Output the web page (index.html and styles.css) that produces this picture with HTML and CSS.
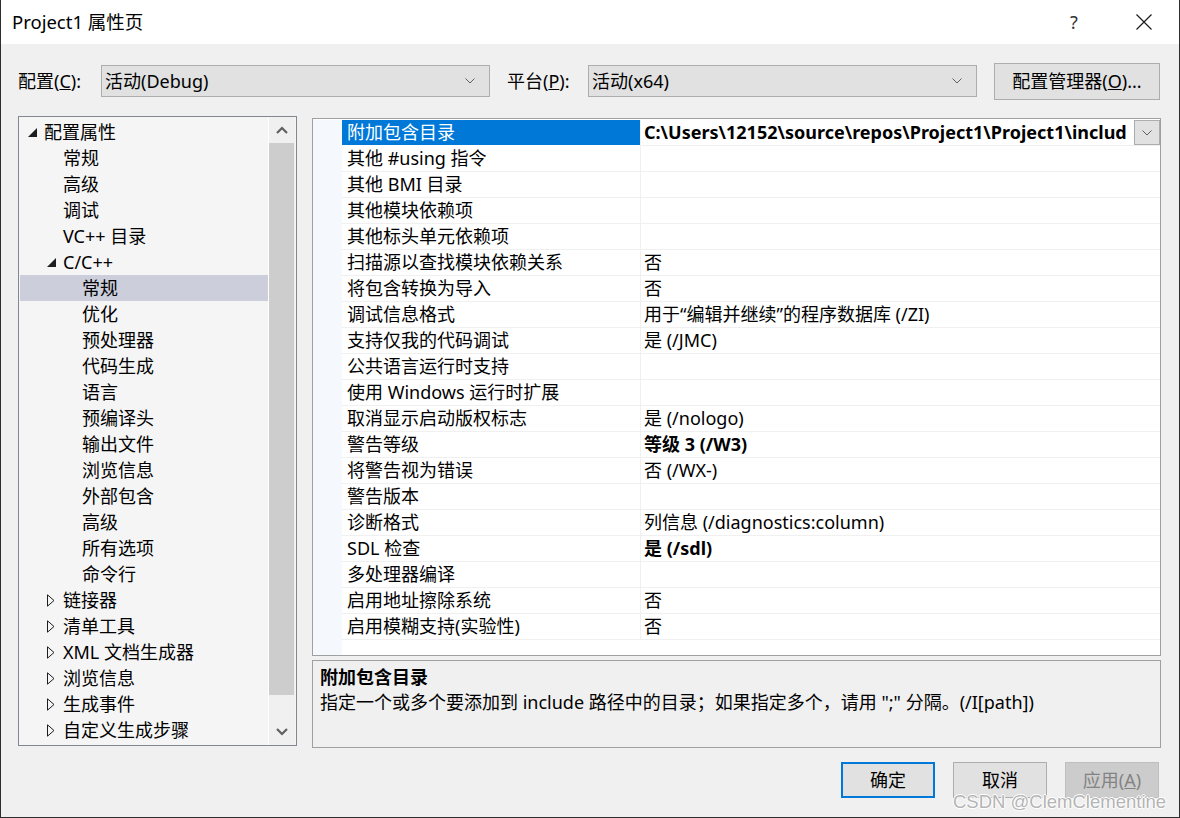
FILE: index.html
```html
<!DOCTYPE html>
<html lang="zh-CN">
<head>
<meta charset="utf-8">
<title>Project1 属性页</title>
<link rel="stylesheet" href="styles.css">
</head>
<body>
<div class="window">
  <div class="titlebar">
    <div class="title">Project1 属性页</div>
    <div class="title-help">?</div>
    <div class="title-close">
      <svg width="16" height="16" viewBox="0 0 16 16"><path d="M0.5 0.5 L15.5 15.5 M15.5 0.5 L0.5 15.5" stroke="#1a1a1a" stroke-width="1.2" fill="none"/></svg>
    </div>
  </div>

  <div class="config-row">
    <span class="lbl">配置(<u>C</u>):</span>
    <div class="combo">
      <span>活动(Debug)</span>
      <svg class="chev" width="10" height="6" viewBox="0 0 10 6"><path d="M0.5 0.5 L5 5 L9.5 0.5" stroke="#606060" stroke-width="1" fill="none"/></svg>
    </div>
    <span class="lbl lbl2">平台(<u>P</u>):</span>
    <div class="combo">
      <span>活动(x64)</span>
      <svg class="chev" width="10" height="6" viewBox="0 0 10 6"><path d="M0.5 0.5 L5 5 L9.5 0.5" stroke="#606060" stroke-width="1" fill="none"/></svg>
    </div>
    <div class="btn cfgmgr">配置管理器(<u>O</u>)...</div>
  </div>

  <div class="main">
    <div class="tree">
      <div class="tree-list">
        <div class="ti l0"><span class="tw"><svg width="9" height="9" viewBox="0 0 9 9"><path d="M9 0 L9 9 L0 9 Z" fill="#1e1e1e"/></svg></span>配置属性</div>
        <div class="ti l1">常规</div>
        <div class="ti l1">高级</div>
        <div class="ti l1">调试</div>
        <div class="ti l1">VC++ 目录</div>
        <div class="ti l1e"><span class="tw"><svg width="9" height="9" viewBox="0 0 9 9"><path d="M9 0 L9 9 L0 9 Z" fill="#1e1e1e"/></svg></span>C/C++</div>
        <div class="ti l2 sel">常规</div>
        <div class="ti l2">优化</div>
        <div class="ti l2">预处理器</div>
        <div class="ti l2">代码生成</div>
        <div class="ti l2">语言</div>
        <div class="ti l2">预编译头</div>
        <div class="ti l2">输出文件</div>
        <div class="ti l2">浏览信息</div>
        <div class="ti l2">外部包含</div>
        <div class="ti l2">高级</div>
        <div class="ti l2">所有选项</div>
        <div class="ti l2">命令行</div>
        <div class="ti l1e"><span class="tw"><svg width="8" height="13" viewBox="0 0 8 13"><path d="M0.5 0.8 L7 6.5 L0.5 12.2 Z" fill="none" stroke="#1e1e1e" stroke-width="1"/></svg></span>链接器</div>
        <div class="ti l1e"><span class="tw"><svg width="8" height="13" viewBox="0 0 8 13"><path d="M0.5 0.8 L7 6.5 L0.5 12.2 Z" fill="none" stroke="#1e1e1e" stroke-width="1"/></svg></span>清单工具</div>
        <div class="ti l1e"><span class="tw"><svg width="8" height="13" viewBox="0 0 8 13"><path d="M0.5 0.8 L7 6.5 L0.5 12.2 Z" fill="none" stroke="#1e1e1e" stroke-width="1"/></svg></span>XML 文档生成器</div>
        <div class="ti l1e"><span class="tw"><svg width="8" height="13" viewBox="0 0 8 13"><path d="M0.5 0.8 L7 6.5 L0.5 12.2 Z" fill="none" stroke="#1e1e1e" stroke-width="1"/></svg></span>浏览信息</div>
        <div class="ti l1e"><span class="tw"><svg width="8" height="13" viewBox="0 0 8 13"><path d="M0.5 0.8 L7 6.5 L0.5 12.2 Z" fill="none" stroke="#1e1e1e" stroke-width="1"/></svg></span>生成事件</div>
        <div class="ti l1e"><span class="tw"><svg width="8" height="13" viewBox="0 0 8 13"><path d="M0.5 0.8 L7 6.5 L0.5 12.2 Z" fill="none" stroke="#1e1e1e" stroke-width="1"/></svg></span>自定义生成步骤</div>
      </div>
      <div class="vscroll">
        <div class="sb-arrow"><svg width="12" height="8" viewBox="0 0 12 8"><path d="M1 7 L6 2 L11 7" stroke="#606060" stroke-width="2.2" fill="none"/></svg></div>
        <div class="sb-thumb"></div>
        <div class="sb-rest"></div>
        <div class="sb-arrow"><svg width="12" height="8" viewBox="0 0 12 8"><path d="M1 1 L6 6 L11 1" stroke="#606060" stroke-width="2.2" fill="none"/></svg></div>
      </div>
    </div>

    <div class="right">
      <div class="grid">
        <div class="row selrow"><div class="gut"></div><div class="nm">附加包含目录</div><div class="val b"><span class="clip">C:\Users\12152\source\repos\Project1\Project1\includ</span><div class="valbtn"><svg width="10" height="6" viewBox="0 0 10 6"><path d="M0.5 0.5 L5 5 L9.5 0.5" stroke="#606060" stroke-width="1" fill="none"/></svg></div></div></div>
        <div class="row"><div class="gut"></div><div class="nm">其他 #using 指令</div><div class="val"></div></div>
        <div class="row"><div class="gut"></div><div class="nm">其他 BMI 目录</div><div class="val"></div></div>
        <div class="row"><div class="gut"></div><div class="nm">其他模块依赖项</div><div class="val"></div></div>
        <div class="row"><div class="gut"></div><div class="nm">其他标头单元依赖项</div><div class="val"></div></div>
        <div class="row"><div class="gut"></div><div class="nm">扫描源以查找模块依赖关系</div><div class="val">否</div></div>
        <div class="row"><div class="gut"></div><div class="nm">将包含转换为导入</div><div class="val">否</div></div>
        <div class="row"><div class="gut"></div><div class="nm">调试信息格式</div><div class="val">用于“编辑并继续”的程序数据库 (/ZI)</div></div>
        <div class="row"><div class="gut"></div><div class="nm">支持仅我的代码调试</div><div class="val">是 (/JMC)</div></div>
        <div class="row"><div class="gut"></div><div class="nm">公共语言运行时支持</div><div class="val"></div></div>
        <div class="row"><div class="gut"></div><div class="nm">使用 Windows 运行时扩展</div><div class="val"></div></div>
        <div class="row"><div class="gut"></div><div class="nm">取消显示启动版权标志</div><div class="val">是 (/nologo)</div></div>
        <div class="row"><div class="gut"></div><div class="nm">警告等级</div><div class="val b">等级 3 (/W3)</div></div>
        <div class="row"><div class="gut"></div><div class="nm">将警告视为错误</div><div class="val">否 (/WX-)</div></div>
        <div class="row"><div class="gut"></div><div class="nm">警告版本</div><div class="val"></div></div>
        <div class="row"><div class="gut"></div><div class="nm">诊断格式</div><div class="val">列信息 (/diagnostics:column)</div></div>
        <div class="row"><div class="gut"></div><div class="nm">SDL 检查</div><div class="val b">是 (/sdl)</div></div>
        <div class="row"><div class="gut"></div><div class="nm">多处理器编译</div><div class="val"></div></div>
        <div class="row"><div class="gut"></div><div class="nm">启用地址擦除系统</div><div class="val">否</div></div>
        <div class="row"><div class="gut"></div><div class="nm">启用模糊支持(实验性)</div><div class="val">否</div></div>
        <div class="grid-fill"><div class="gut"></div></div>
      </div>
      <div class="desc">
        <div class="desc-title">附加包含目录</div>
        <div class="desc-text">指定一个或多个要添加到 include 路径中的目录；如果指定多个，请用 ";" 分隔。(/I[path])</div>
      </div>
    </div>
  </div>

  <div class="buttons">
    <div class="btn dlg default">确定</div>
    <div class="btn dlg">取消</div>
    <div class="btn dlg disabled">应用(<u>A</u>)</div>
  </div>

  <div class="watermark">CSDN @ClemClementine</div>
</div>
</body>
</html>
```

FILE: styles.css
```css
* { box-sizing: border-box; }
html, body { margin: 0; padding: 0; }
body {
  width: 1180px;
  height: 818px;
  overflow: hidden;
  font-family: "Noto Sans", "Noto Sans CJK SC", sans-serif;
  font-size: 18px;
  color: #000;
  background: #f0f0f0;
}
.window {
  position: relative;
  width: 1180px;
  height: 818px;
  background: #f0f0f0;
  border-left: 1px solid #2e2e2e;
  border-right: 1px solid #2e2e2e;
  border-bottom: 1px solid #2e2e2e;
  display: flex;
  flex-direction: column;
}
.titlebar {
  height: 44px;
  background: #fff;
  display: flex;
  align-items: center;
  padding-left: 11px;
  flex-shrink: 0;
}
.title { font-size: 18.5px; flex: 1; line-height: 44px; }
.title-help { font-size: 18px; color: #333; width: 18px; margin-right: 48px; }
.title-close { width: 16px; height: 16px; margin-right: 27px; display: flex; }

.config-row {
  display: flex;
  align-items: center;
  height: 38px;
  margin-top: 18px;
  padding-left: 17px;
}
.lbl { width: 83px; line-height: 24px; white-space: nowrap; }
.lbl2 { margin-left: 17px; width: 81px; }
.combo {
  width: 389px;
  height: 32px;
  background: #e1e1e1;
  border: 1px solid #adadad;
  display: flex;
  align-items: center;
  justify-content: space-between;
  padding: 0 14px 0 3px;
  line-height: 24px;
}
.chev { display: block; }
.btn {
  background: #e1e1e1;
  border: 1px solid #adadad;
  display: flex;
  align-items: center;
  justify-content: center;
  line-height: 24px;
  white-space: nowrap;
}
.cfgmgr { width: 166px; height: 37px; margin-left: 17px; }

.main {
  display: flex;
  gap: 15px;
  margin-top: 16px;
  padding-left: 17px;
  height: 632px;
}
.tree {
  width: 279px;
  height: 630px;
  border: 1px solid #828790;
  background: #f5f5f5;
  display: flex;
}
.tree-list {
  width: 250px;
  padding-top: 2px;
  border-right: 1px solid #fff;
}
.ti {
  height: 26px;
  line-height: 26px;
  display: flex;
  align-items: center;
  white-space: nowrap;
  margin-left: 1px;
}
.ti.sel { background: #cccedb; }
.tw { display: inline-flex; width: 16px; height: 26px; align-items: center; }
.l0 { padding-left: 8px; }
.l1 { padding-left: 43px; }
.l1e { padding-left: 27px; }
.l2 { padding-left: 62px; }

.vscroll {
  width: 26px;
  display: flex;
  flex-direction: column;
  background: #f0f0f0;
}
.sb-arrow { height: 26px; display: flex; align-items: center; justify-content: center; }
.sb-thumb { height: 552px; background: #cdcdcd; margin: 0 1px 0 0; }
.sb-rest { flex: 1; }

.right {
  width: 849px;
  display: flex;
  flex-direction: column;
  gap: 4px;
  margin-top: 2px;
}
.grid {
  height: 538px;
  border: 1px solid #a0a0a0;
  background: #fff;
  display: flex;
  flex-direction: column;
  padding-top: 1px;
}
.row { display: flex; height: 26px; flex-shrink: 0; }
.gut { width: 29px; background: #f5f8fc; flex-shrink: 0; }
.nm {
  width: 299px;
  padding-left: 5px;
  line-height: 25px;
  border-bottom: 1px solid #f0f0f0;
  border-right: 1px solid #f0f0f0;
  white-space: nowrap;
}
.val {
  flex: 1;
  min-width: 0;
  padding-left: 3px;
  line-height: 25px;
  border-bottom: 1px solid #f0f0f0;
  white-space: nowrap;
  display: flex;
}
.clip { flex: 1; min-width: 0; }
.b { font-weight: bold; }
.selrow .nm { background: #0078d7; color: #fff; border-bottom-color: #fff; }
.valbtn {
  width: 26px;
  height: 25px;
  background: #e1e1e1;
  border: 1px solid #adadad;
  display: flex;
  align-items: center;
  justify-content: center;
  flex-shrink: 0;
}
.grid-fill { flex: 1; display: flex; }

.desc {
  height: 88px;
  border: 1px solid #a0a0a0;
  background: #f0f0f0;
  padding: 4px 7px;
}
.desc-title { font-weight: bold; line-height: 24px; }
.desc-text { line-height: 26px; }

.buttons {
  display: flex;
  justify-content: flex-end;
  gap: 18px;
  margin-top: 14px;
  padding-right: 20px;
}
.dlg { width: 94px; height: 36px; }
.dlg.default { border: 2px solid #0078d7; }
.dlg.disabled { background: #cccccc; border-color: #bfbfbf; color: #838383; }

.watermark {
  position: absolute;
  left: 952px;
  top: 791px;
  font-family: "Liberation Sans", sans-serif;
  font-size: 18.5px;
  color: #b4b4b4;
  text-shadow: 1px 0 #fff, -1px 0 #fff, 0 1px #fff, 0 -1px #fff;
  line-height: 22px;
}
```
